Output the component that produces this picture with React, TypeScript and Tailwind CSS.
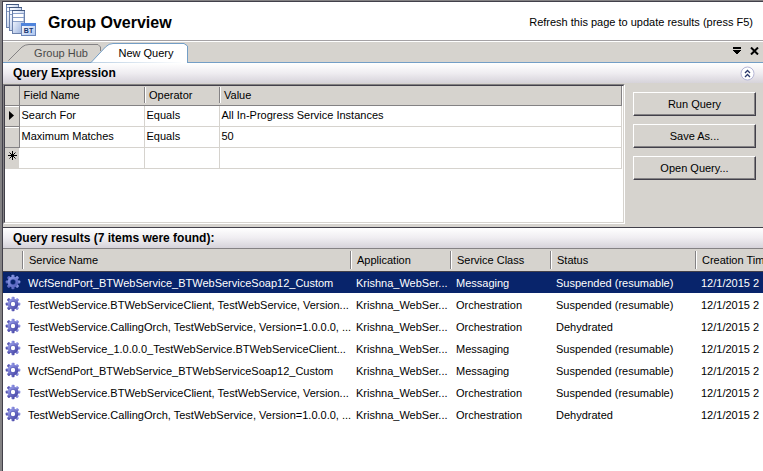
import React from "react";

const criteria = [
  { field: "Search For", operator: "Equals", value: "All In-Progress Service Instances" },
  { field: "Maximum Matches", operator: "Equals", value: "50" },
];

const custom = "WcfSendPort_BTWebService_BTWebServiceSoap12_Custom";
const client = "TestWebService.BTWebServiceClient, TestWebService, Version...";
const orch = "TestWebService.CallingOrch, TestWebService, Version=1.0.0.0, ...";
const port = "TestWebService_1.0.0.0_TestWebService.BTWebServiceClient...";

const results = [
  { name: custom, type: "Messaging", status: "Suspended (resumable)" },
  { name: client, type: "Orchestration", status: "Suspended (resumable)" },
  { name: orch, type: "Orchestration", status: "Dehydrated" },
  { name: port, type: "Messaging", status: "Suspended (resumable)" },
  { name: custom, type: "Messaging", status: "Suspended (resumable)" },
  { name: client, type: "Orchestration", status: "Suspended (resumable)" },
  { name: orch, type: "Orchestration", status: "Dehydrated" },
];

function ServerIcon() {
  return (
    <svg width="32" height="34" viewBox="0 0 32 34" aria-hidden="true">
      <defs>
        <linearGradient id="page" x1="0" y1="0" x2="1" y2="1">
          <stop offset="0.2" stopColor="#f4f8ff" />
          <stop offset="1" stopColor="#8ea8d8" />
        </linearGradient>
        <linearGradient id="window" x1="0" y1="0" x2="1" y2="1">
          <stop offset="0" stopColor="#ffffff" />
          <stop offset="1" stopColor="#a9c3f0" />
        </linearGradient>
      </defs>
      {[0, 1, 2].map((i) => (
        <g key={i} transform={`translate(${i * 3} ${i * 3})`}>
          <rect x="0.5" y="0.5" width="12" height="23" fill="url(#page)" stroke="#6a80aa" />
          <path d="M0 .5h13" stroke="#42587f" />
          <rect x="2" y="4" width="9" height="3" fill="#ffffff" />
          <path d="M1 3.500h11M1 7.500h11" stroke="#8ba0c8" />
        </g>
      ))}
      <rect x="8" y="14" width="9" height="3" fill="#ffffff" />
      <path d="M7 17.500h11" stroke="#8ba0c8" />
      <rect x="15.500" y="19.500" width="14" height="12" fill="url(#window)" stroke="#6b86bb" />
      <rect x="15" y="19" width="15" height="3" fill="#4f84dc" />
      <text x="22.500" y="29" textAnchor="middle" fontSize="7" fontWeight="bold" fontFamily="Liberation Sans, sans-serif" fill="#17346f">BT</text>
    </svg>
  );
}

function Gear({ selected }: { selected: boolean }) {
  return (
    <svg width="16" height="16" viewBox="0 0 16 16" aria-hidden="true">
      <defs>
        <linearGradient id="gear" x1="0" y1="0" x2="1" y2="1">
          <stop offset="0" stopColor="#a3aaf4" />
          <stop offset="1" stopColor="#3d3a9c" />
        </linearGradient>
        <linearGradient id="gearSelected" x1="0" y1="0" x2="1" y2="1">
          <stop offset="0" stopColor="#94a4ec" />
          <stop offset="1" stopColor="#4a55b4" />
        </linearGradient>
      </defs>
      <g fill={selected ? "url(#gearSelected)" : "url(#gear)"}>
        {[0, 45, 90, 135].map((a) => (
          <rect key={a} x="6.500" y="0.700" width="3" height="14.600" rx="0.800" transform={`rotate(${a} 8 8)`} />
        ))}
        <circle cx="8" cy="8" r="5.400" />
      </g>
      <circle cx="8" cy="8" r="2.800" fill={selected ? "#354a9e" : "#5054b4"} />
      <circle cx="8" cy="8" r="2.200" fill={selected ? "#08246b" : "#ffffff"} />
    </svg>
  );
}

function SectionBar({ title, children }: { title: string; children?: React.ReactNode }) {
  return (
    <div className="flex h-5 items-center justify-between bg-linear-to-b from-white via-[#efedf1] to-[#d6d3da] pr-2 pl-[10px]">
      <h2 className="text-[12px] leading-4 font-bold">{title}</h2>
      {children}
    </div>
  );
}

function PushButton({ children }: { children: React.ReactNode }) {
  return (
    <button
      type="button"
      className="h-6 w-full border border-t-white border-r-[#42404a] border-b-[#42404a] border-l-white bg-[#d6d3ce] leading-4 shadow-[inset_-1px_-1px_0_#848284]"
    >
      {children}
    </button>
  );
}

function GridHead({ children, ruled = true, last = false }: { children: React.ReactNode; ruled?: boolean; last?: boolean }) {
  return (
    <th className={last ? "border-r border-b border-[#848284] p-0 text-left font-normal" : "border-b border-[#848284] p-0 text-left font-normal"}>
      <div className={ruled ? "h-4 border-l border-[#848284] pl-1 leading-4 shadow-[inset_1px_0_0_#ffffff]" : "h-4 pl-1 leading-4"}>
        {children}
      </div>
    </th>
  );
}

function ResultHead({ children }: { children: React.ReactNode }) {
  return (
    <th className="p-0 text-left font-normal">
      <div className="h-[18px] border-l border-[#848284] pl-[6px] leading-[18px] whitespace-nowrap shadow-[inset_1px_0_0_#ffffff]">{children}</div>
    </th>
  );
}

export default function App() {
  return (
    <div className="min-h-screen overflow-hidden border-t border-l-2 border-[#848284] bg-white font-['Liberation_Sans',Arial,sans-serif] text-[11px] leading-4 text-black">
      <div className="min-h-screen border-t border-l border-[#42404a]">
        <header className="flex h-[39px] items-center justify-between border-b border-[#a5a2a5] pr-[10px] pl-[3px]">
          <div className="flex items-center gap-[10px]">
            <ServerIcon />
            <h1 className="pt-1 text-[16px] leading-6 font-bold">Group Overview</h1>
          </div>
          <p className="pt-[2px]">Refresh this page to update results (press F5)</p>
        </header>

        <nav className="flex h-[22px] items-end justify-between border-t border-b border-t-white border-b-[#739ec6] bg-[#d6d3ce] pr-1">
          <div role="tablist" className="flex">
            <button type="button" role="tab" aria-selected="false" className="relative h-[18px] w-[98px] pt-[2px] pl-[18px] leading-4 text-[#4a4a4a]">
              <svg className="absolute top-0 left-0" width="98" height="18" viewBox="0 0 98 18" aria-hidden="true">
                <path d="M5.500 17.500L19 4Q22 1.500 26 1.500H95L97.500 4V8" fill="none" stroke="#848284" />
              </svg>
              <span className="relative">Group Hub</span>
            </button>
            <button type="button" role="tab" aria-selected="true" className="relative -mb-px -ml-[10px] h-5 w-[98px] pl-[12px] leading-4">
              <svg className="absolute top-0 left-0" width="98" height="20" viewBox="0 0 98 20" aria-hidden="true">
                <path d="M0 19.500L14.500 4Q18 .5 22 .5H93L96.500 3V20" fill="#ffffff" stroke="#739ec6" />
              </svg>
              <span className="relative">New Query</span>
            </button>
          </div>
          <div className="flex h-full items-center gap-2 pb-[2px]">
            <button type="button" aria-label="Tab list" className="p-px">
              <svg width="8" height="8" viewBox="0 0 8 8" aria-hidden="true">
                <path d="M0 0h8v2H0zM0 3h8v1H7v1H6v1H5v1H3V6H2V5H1V4H0z" fill="#000" />
              </svg>
            </button>
            <button type="button" aria-label="Close tab">
              <svg width="9" height="8" viewBox="0 0 9 8" aria-hidden="true">
                <path d="M1 .5l7 7M8 .5l-7 7" stroke="#000" strokeWidth="2" />
              </svg>
            </button>
          </div>
        </nav>

        <main>
          <section>
            <SectionBar title="Query Expression">
              <button type="button" aria-label="Collapse">
                <svg width="15" height="15" viewBox="0 0 15 15" aria-hidden="true">
                  <circle cx="7.500" cy="7.500" r="6.500" fill="#fff" stroke="#b5b6d6" />
                  <path d="M5 7l2.500-2.500L10 7M5 11l2.500-2.500L10 11" fill="none" stroke="#29386b" strokeWidth="1.300" />
                </svg>
              </button>
            </SectionBar>
            <div className="flex bg-[#d6d3ce] pt-px pr-[7px] pb-[3px]">
              <div className="h-[140px] min-w-0 flex-1 border border-t-[#848284] border-r-white border-b-white border-l-[#848284]">
                <div className="h-full border border-t-[#42404a] border-r-[#d6d3ce] border-b-[#d6d3ce] border-l-[#42404a] bg-white pr-px">
                  <table className="w-full table-fixed border-collapse">
                    <colgroup>
                      <col className="w-[14px]" />
                      <col className="w-[125px]" />
                      <col className="w-[75px]" />
                      <col />
                    </colgroup>
                    <thead>
                      <tr className="h-[19px] bg-[#d6d3ce]">
                        <th className="border-r border-b border-[#848284] p-0" aria-label="Row" />
                        <GridHead ruled={false}>Field Name</GridHead>
                        <GridHead>Operator</GridHead>
                        <GridHead last>Value</GridHead>
                      </tr>
                    </thead>
                    <tbody>
                      {criteria.map((row, i) => (
                        <tr key={row.field} className="h-[21px]">
                          <th className="border-r border-b border-[#848284] bg-[#d6d3ce] p-0 shadow-[inset_0_1px_0_#ffffff]">
                            {i === 0 && (
                              <svg className="mx-auto" width="5" height="9" viewBox="0 0 5 9" aria-hidden="true">
                                <path d="M0 0l5 4.500L0 9z" fill="#000" />
                              </svg>
                            )}
                          </th>
                          <td className="border-r border-b border-[#d6d3ce] p-0 pb-[2px] pl-[2px]">{row.field}</td>
                          <td className="border-r border-b border-[#d6d3ce] p-0 pb-[2px] pl-[2px]">{row.operator}</td>
                          <td className="border-r border-b border-[#d6d3ce] p-0 pb-[2px] pl-[2px]">{row.value}</td>
                        </tr>
                      ))}
                      <tr className="h-[21px]">
                        <th className="border-b border-[#d6d3ce] bg-[#d6d3ce] p-0 pb-1">
                          <svg className="mx-auto" width="9" height="9" viewBox="0 0 9 9" aria-hidden="true">
                            <path d="M4.500 0v9M0 4.500h9M1.500 1.500l6 6M7.500 1.500l-6 6" stroke="#000" />
                          </svg>
                        </th>
                        <td className="border-r border-b border-[#d6d3ce] p-0" />
                        <td className="border-r border-b border-[#d6d3ce] p-0" />
                        <td className="border-r border-b border-[#d6d3ce] p-0" />
                      </tr>
                    </tbody>
                  </table>
                </div>
              </div>
              <div className="ml-2 flex w-[123px] flex-col gap-2 pt-2">
                <PushButton>Run Query</PushButton>
                <PushButton>Save As...</PushButton>
                <PushButton>Open Query...</PushButton>
              </div>
            </div>
          </section>

          <section className="border-t border-[#42404a]">
            <SectionBar title="Query results (7 items were found):" />
            <div className="overflow-hidden border-t border-[#848284]">
              <table className="w-[calc(100%+43px)] min-w-[803px] table-fixed border-collapse">
                <colgroup>
                  <col className="w-[19px]" />
                  <col className="w-[328px]" />
                  <col className="w-[100px]" />
                  <col className="w-[100px]" />
                  <col className="w-[145px]" />
                  <col />
                </colgroup>
                <thead>
                  <tr className="h-[22px] border-b border-[#42404a] bg-[#d6d3ce]">
                    <th className="p-0" aria-label="Type" />
                    <ResultHead>Service Name</ResultHead>
                    <ResultHead>Application</ResultHead>
                    <ResultHead>Service Class</ResultHead>
                    <ResultHead>Status</ResultHead>
                    <ResultHead>Creation Time</ResultHead>
                  </tr>
                </thead>
                <tbody>
                  {results.map((row, i) => (
                    <tr key={i} className={i === 0 ? "h-[22px] bg-[#08246b] text-white" : "h-[22px]"}>
                      <td className="p-0 pl-[2px]"><Gear selected={i === 0} /></td>
                      <td className="p-0 pt-[2px] pl-[6px] whitespace-nowrap">{row.name}</td>
                      <td className="p-0 pt-[2px] pl-[6px] whitespace-nowrap">Krishna_WebSer...</td>
                      <td className="p-0 pt-[2px] pl-[6px]">{row.type}</td>
                      <td className="p-0 pt-[2px] pl-[6px]">{row.status}</td>
                      <td className="p-0 pt-[2px] pl-[6px] whitespace-nowrap">12/1/2015 2</td>
                    </tr>
                  ))}
                </tbody>
              </table>
            </div>
          </section>
        </main>
      </div>
    </div>
  );
}
